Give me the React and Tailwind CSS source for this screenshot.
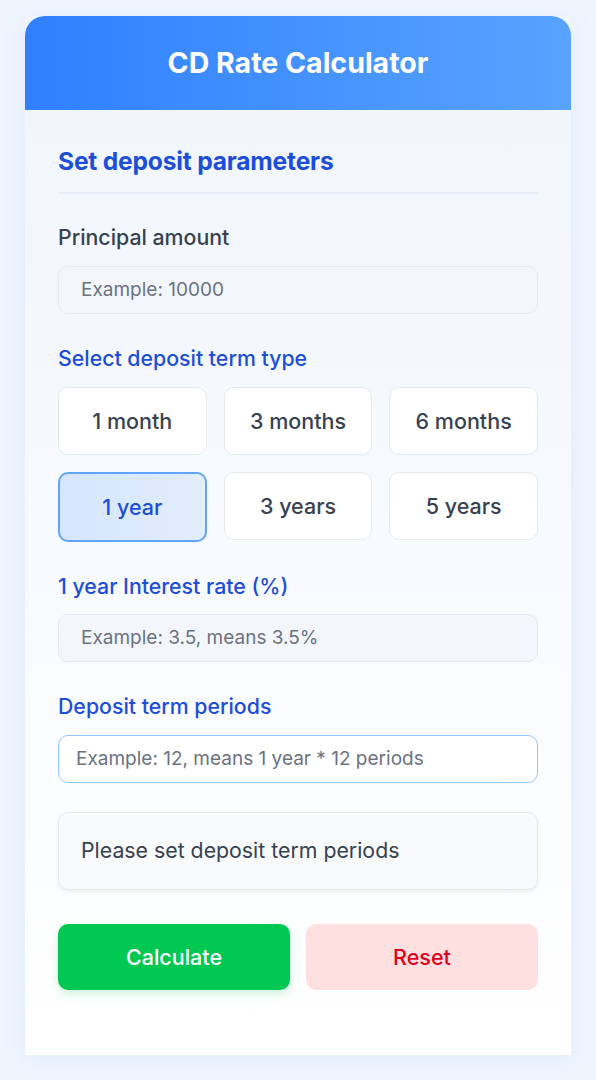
const TERMS = ['1 month', '3 months', '6 months', '1 year', '3 years', '5 years'];

const font = { fontFamily: 'Inter, "Liberation Sans", sans-serif' };

export default function App() {
  return (
    <div className="min-h-[1080px] bg-[#eff5fd] pt-4" style={font}>
      <div className="mx-[25px] shadow-[0_4px_24px_rgba(59,130,246,0.08)]">
        <div className="flex h-[94px] items-center justify-center rounded-t-[20px] bg-gradient-to-r from-[#2f7fff] to-[#58a3ff]">
          <h1 className="text-[28.5px] font-bold leading-[34px] text-white">CD Rate Calculator</h1>
        </div>
        <div className="h-[945px] bg-gradient-to-b from-[#f1f6fd] to-white px-[33px] pt-[35px]">
          <h2 className="border-b-2 border-[#e8eef7] pb-[15px] text-[24.6px] font-bold leading-[32px] tracking-[-0.2px] text-[#1d4ed8]">
            Set deposit parameters
          </h2>

          <label className="mt-[29px] block text-[21.3px] font-medium leading-[28px] text-[#374151]">Principal amount</label>
          <div className="mt-[15px] flex h-[48px] items-center rounded-[10px] border border-[#e3e9f2] bg-[#f3f7fd] px-[22px] text-[19px] text-[#6b7280]">
            Example: 10000
          </div>

          <label className="mt-[30px] block text-[21.3px] font-medium leading-[28px] text-[#1d4ed8]">Select deposit term type</label>
          <div className="mt-[15px] grid grid-cols-3 gap-x-[17px] gap-y-[17px]">
            {TERMS.map((t) =>
              t === '1 year' ? (
                <button
                  key={t}
                  className="h-[70px] rounded-[10px] border-2 border-[#60a5fa] bg-gradient-to-r from-[#d6e6fd] to-[#e2edfd] text-[21.5px] font-medium text-[#1d4ed8]"
                >
                  {t}
                </button>
              ) : (
                <button
                  key={t}
                  className="h-[68px] rounded-[10px] border border-[#e5eaf1] bg-white text-[21.5px] font-medium text-[#374151]"
                >
                  {t}
                </button>
              )
            )}
          </div>

          <label className="mt-[30px] block text-[21.3px] font-medium leading-[28px] text-[#1d4ed8]">1 year Interest rate (%)</label>
          <div className="mt-[14px] flex h-[48px] items-center rounded-[10px] border border-[#e3e9f2] bg-[#f3f7fd] px-[22px] text-[19px] text-[#6b7280]">
            Example: 3.5, means 3.5%
          </div>

          <label className="mt-[30px] block text-[21.3px] font-medium leading-[28px] text-[#1d4ed8]">Deposit term periods</label>
          <div className="mt-[15px] flex h-[48px] items-center rounded-[10px] border border-[#93c5fd] bg-white px-[17px] text-[19px] text-[#6b7280]">
            Example: 12, means 1 year * 12 periods
          </div>

          <div className="mt-[29px] flex h-[78px] items-center rounded-[10px] border border-[#e5e9ef] bg-[#f8fafc] px-[22px] text-[21.3px] text-[#374151] shadow-[0_2px_4px_rgba(0,0,0,0.06)]">
            Please set deposit term periods
          </div>

          <div className="mt-[34px] grid grid-cols-2 gap-[16px]">
            <button className="h-[66px] rounded-[10px] bg-[#00c853] text-[21.5px] font-medium text-white shadow-[0_4px_10px_rgba(0,200,83,0.2)]">
              Calculate
            </button>
            <button className="h-[66px] rounded-[10px] bg-[#ffe0e0] text-[21.5px] font-medium text-[#e0001b]">
              Reset
            </button>
          </div>
        </div>
      </div>
    </div>
  );
}
